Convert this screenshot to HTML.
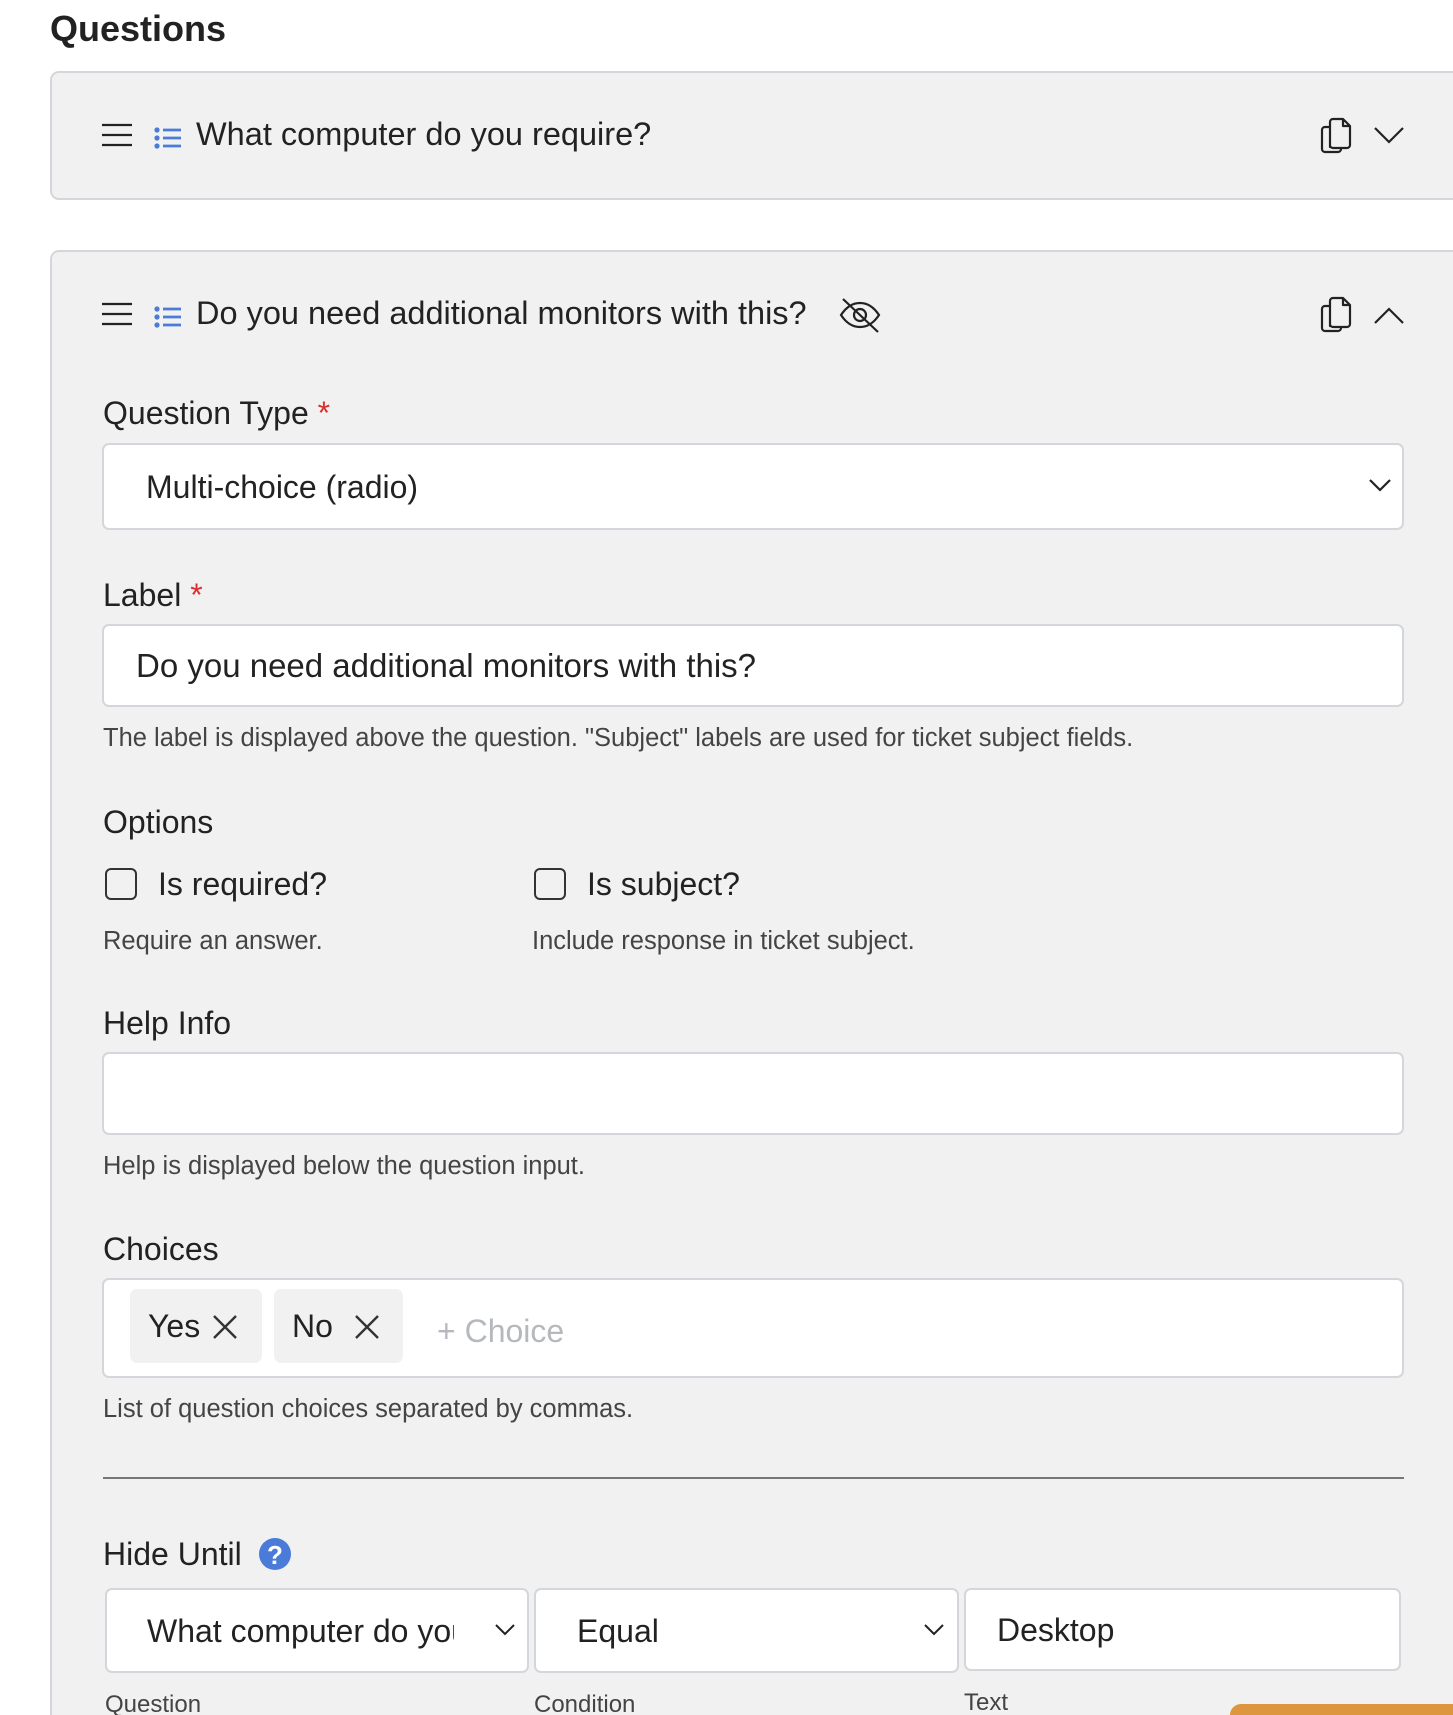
<!DOCTYPE html>
<html style="overflow:hidden;height:1715px"><head><meta charset="utf-8">
<style>
*{box-sizing:border-box;margin:0;padding:0}
html,body{overflow:hidden}
body{width:1453px;height:1715px;background:#fff;font-family:"Liberation Sans",sans-serif;color:#222;position:relative}
.a{position:absolute;white-space:nowrap}
.card{position:absolute;left:50px;width:1420px;background:#f1f1f1;border:2px solid #d3d6da;border-radius:9px}
.box{position:absolute;background:#fff;border:2px solid #d3d6da;border-radius:7px}
.lbl{font-size:32px;color:#222}
.help{font-size:25.5px;color:#444}
.req{color:#d9302c}
.cb{position:absolute;width:32px;height:32px;border:2.5px solid #333;border-radius:6px}
.chip{position:absolute;background:#f1f1f1;border-radius:7px;top:1289px;height:74px}
</style></head><body>
<div class="a" style="left:50px;top:8px;font-size:36px;font-weight:bold;color:#222">Questions</div>

<div class="card" style="top:71px;height:129px"></div>
<div class="card" style="top:250px;height:1480px"></div>

<!-- header 1 -->
<svg class="a" style="left:102px;top:120px" width="30" height="30"><path d="M0 5H30M0 15H30M0 25H30" stroke="#222" stroke-width="2.2"/></svg>
<svg class="a" style="left:154px;top:124px" width="28" height="26"><g fill="#4a7bd8"><circle cx="3" cy="6" r="2.6"/><circle cx="3" cy="14" r="2.6"/><circle cx="3" cy="22" r="2.6"/></g><path d="M9 6H27M9 14H27M9 22H27" stroke="#4a7bd8" stroke-width="2.8"/></svg>
<div class="a" style="left:196px;top:116px;font-size:32.5px">What computer do you require?</div>
<svg class="a" style="left:1320px;top:117px" width="34" height="38"><path d="M10 30V5a3 3 0 0 1 3-3h10l7 7v19a3 3 0 0 1-3 3H13a3 3 0 0 1-3-3z M23 2v7h7" fill="none" stroke="#222" stroke-width="2.2" stroke-linejoin="round"/><path d="M10 10H5a3 3 0 0 0-3 3v19a3 3 0 0 0 3 3h13a3 3 0 0 0 3-3v-1" fill="none" stroke="#222" stroke-width="2.2"/></svg>
<svg class="a" style="left:1373px;top:126px" width="32" height="20"><path d="M2 2L16 16L30 2" fill="none" stroke="#222" stroke-width="2.2"/></svg>

<!-- header 2 -->
<svg class="a" style="left:102px;top:299px" width="30" height="30"><path d="M0 5H30M0 15H30M0 25H30" stroke="#222" stroke-width="2.2"/></svg>
<svg class="a" style="left:154px;top:303px" width="28" height="26"><g fill="#4a7bd8"><circle cx="3" cy="6" r="2.6"/><circle cx="3" cy="14" r="2.6"/><circle cx="3" cy="22" r="2.6"/></g><path d="M9 6H27M9 14H27M9 22H27" stroke="#4a7bd8" stroke-width="2.8"/></svg>
<div class="a" style="left:196px;top:295px;font-size:32.5px">Do you need additional monitors with this?</div>
<svg class="a" style="left:838px;top:296px" width="44" height="38"><g fill="none" stroke="#222" stroke-width="2.2"><path d="M3 19C9 10 15 7 22 7S35 10 41 19C35 28 29 31 22 31S9 28 3 19z"/><circle cx="22" cy="19" r="6"/><path d="M5 3L40 36"/></g></svg>
<svg class="a" style="left:1320px;top:296px" width="34" height="38"><path d="M10 30V5a3 3 0 0 1 3-3h10l7 7v19a3 3 0 0 1-3 3H13a3 3 0 0 1-3-3z M23 2v7h7" fill="none" stroke="#222" stroke-width="2.2" stroke-linejoin="round"/><path d="M10 10H5a3 3 0 0 0-3 3v19a3 3 0 0 0 3 3h13a3 3 0 0 0 3-3v-1" fill="none" stroke="#222" stroke-width="2.2"/></svg>
<svg class="a" style="left:1373px;top:306px" width="32" height="20"><path d="M2 17L16 3L30 17" fill="none" stroke="#222" stroke-width="2.2"/></svg>

<!-- Question type -->
<div class="a lbl" style="left:103px;top:395px">Question Type <span class="req">*</span></div>
<div class="box" style="left:102px;top:443px;width:1302px;height:87px"></div>
<div class="a" style="left:146px;top:469px;font-size:32px">Multi-choice (radio)</div>
<svg class="a" style="left:1368px;top:478px" width="24" height="16"><path d="M2 2L12 12L22 2" fill="none" stroke="#222" stroke-width="2.2"/></svg>

<!-- Label -->
<div class="a lbl" style="left:103px;top:577px">Label <span class="req">*</span></div>
<div class="box" style="left:102px;top:624px;width:1302px;height:83px"></div>
<div class="a" style="left:136px;top:647px;font-size:33px">Do you need additional monitors with this?</div>
<div class="a help" style="left:103px;top:724px">The label is displayed above the question. "Subject" labels are used for ticket subject fields.</div>

<!-- Options -->
<div class="a lbl" style="left:103px;top:804px">Options</div>
<div class="cb" style="left:105px;top:868px"></div>
<div class="a" style="left:158px;top:866px;font-size:32px">Is required?</div>
<div class="cb" style="left:534px;top:868px"></div>
<div class="a" style="left:587px;top:866px;font-size:32px">Is subject?</div>
<div class="a help" style="left:103px;top:927px">Require an answer.</div>
<div class="a help" style="left:532px;top:927px">Include response in ticket subject.</div>

<!-- Help info -->
<div class="a lbl" style="left:103px;top:1005px">Help Info</div>
<div class="box" style="left:102px;top:1052px;width:1302px;height:83px"></div>
<div class="a help" style="left:103px;top:1152px">Help is displayed below the question input.</div>

<!-- Choices -->
<div class="a lbl" style="left:103px;top:1231px">Choices</div>
<div class="box" style="left:102px;top:1278px;width:1302px;height:100px"></div>
<div class="chip" style="left:130px;width:132px"></div>
<div class="chip" style="left:274px;width:129px"></div>
<div class="a" style="left:148px;top:1308px;font-size:32px">Yes</div>
<svg class="a" style="left:212px;top:1314px" width="26" height="26"><path d="M2 2L24 24M24 2L2 24" stroke="#333" stroke-width="2.4"/></svg>
<div class="a" style="left:292px;top:1308px;font-size:32px">No</div>
<svg class="a" style="left:354px;top:1314px" width="26" height="26"><path d="M2 2L24 24M24 2L2 24" stroke="#333" stroke-width="2.4"/></svg>
<div class="a" style="left:437px;top:1313px;font-size:32px;color:#b5b8bd">+ Choice</div>
<div class="a help" style="left:103px;top:1395px">List of question choices separated by commas.</div>

<div class="a" style="left:103px;top:1477px;width:1301px;height:2px;background:#777"></div>

<!-- Hide until -->
<div class="a lbl" style="left:103px;top:1536px">Hide Until</div>
<svg class="a" style="left:258px;top:1537px" width="34" height="34"><circle cx="17" cy="17" r="16" fill="#4a7bd8"/><text x="17" y="27" text-anchor="middle" font-family="Liberation Sans" font-weight="bold" font-size="26" fill="#fff">?</text></svg>

<div class="box" style="left:105px;top:1588px;width:424px;height:85px"></div>
<div class="a" style="left:147px;top:1613px;font-size:32px;width:307px;overflow:hidden">What computer do you require?</div>
<svg class="a" style="left:494px;top:1623px" width="22" height="14"><path d="M2 2L11 11L20 2" fill="none" stroke="#222" stroke-width="2"/></svg>
<div class="box" style="left:534px;top:1588px;width:425px;height:85px"></div>
<div class="a" style="left:577px;top:1613px;font-size:32px">Equal</div>
<svg class="a" style="left:923px;top:1623px" width="22" height="14"><path d="M2 2L11 11L20 2" fill="none" stroke="#222" stroke-width="2"/></svg>
<div class="box" style="left:964px;top:1588px;width:437px;height:83px"></div>
<div class="a" style="left:997px;top:1612px;font-size:32px">Desktop</div>

<div class="a" style="left:105px;top:1691px;font-size:24px;color:#444">Question</div>
<div class="a" style="left:534px;top:1691px;font-size:24px;color:#444">Condition</div>
<div class="a" style="left:964px;top:1689px;font-size:24px;color:#444">Text</div>
<div class="a" style="left:1230px;top:1704px;width:260px;height:11px;border-radius:40px 40px 0 0;background:#dd963d"></div>
</body></html>
